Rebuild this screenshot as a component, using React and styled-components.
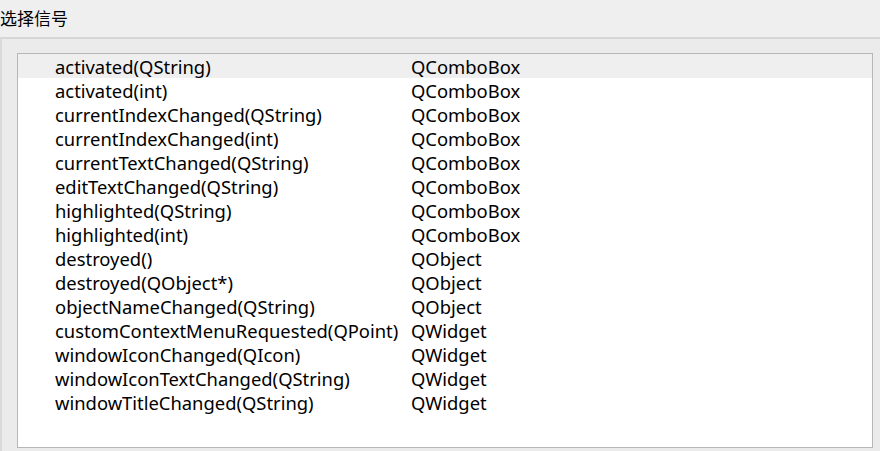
import React from "react";
import styled, { createGlobalStyle } from "styled-components";

const Global = createGlobalStyle`
  html, body { margin: 0; padding: 0; background: #efefef; overflow: hidden; }
  * { box-sizing: border-box; }
`;

const Page = styled.div`
  width: 880px;
  height: 451px;
  background: #efefef;
  display: flex;
  flex-direction: column;
  font-family: "Noto Sans", "Noto Sans CJK SC", sans-serif;
  color: #000;
`;

const Title = styled.div`
  height: 37px;
  padding: 6px 0 0 0;
  font-size: 17px;
  line-height: 24px;
  font-family: "Noto Sans CJK SC", sans-serif;
`;

const GroupBox = styled.div`
  flex: 1;
  border-top: 2px solid #d6d6d6;
  border-left: 2px solid #dadada;
  background: #ebebeb;
  padding: 14px 0 0 15px;
`;

const List = styled.div`
  width: 856px;
  height: 395px;
  border: 1px solid #b6b6b6;
  background: #fff;
  display: flex;
  flex-direction: column;
`;

const Row = styled.div`
  height: 24px;
  display: grid;
  grid-template-columns: 356px 1fr;
  padding-left: 37px;
  padding-top: 1px;
  background: ${(p) => (p.$selected ? "#efefef" : "#fff")};
  font-size: 18.4px;
  line-height: 23px;
  white-space: nowrap;
`;

const rows = [
  ["activated(QString)", "QComboBox"],
  ["activated(int)", "QComboBox"],
  ["currentIndexChanged(QString)", "QComboBox"],
  ["currentIndexChanged(int)", "QComboBox"],
  ["currentTextChanged(QString)", "QComboBox"],
  ["editTextChanged(QString)", "QComboBox"],
  ["highlighted(QString)", "QComboBox"],
  ["highlighted(int)", "QComboBox"],
  ["destroyed()", "QObject"],
  ["destroyed(QObject*)", "QObject"],
  ["objectNameChanged(QString)", "QObject"],
  ["customContextMenuRequested(QPoint)", "QWidget"],
  ["windowIconChanged(QIcon)", "QWidget"],
  ["windowIconTextChanged(QString)", "QWidget"],
  ["windowTitleChanged(QString)", "QWidget"],
];

export default function App() {
  return (
    <>
      <Global />
      <Page>
        <Title>选择信号</Title>
        <GroupBox>
          <List>
            {rows.map(([sig, cls], i) => (
              <Row key={i} $selected={i === 0}>
                <span>{sig}</span>
                <span>{cls}</span>
              </Row>
            ))}
          </List>
        </GroupBox>
      </Page>
    </>
  );
}
